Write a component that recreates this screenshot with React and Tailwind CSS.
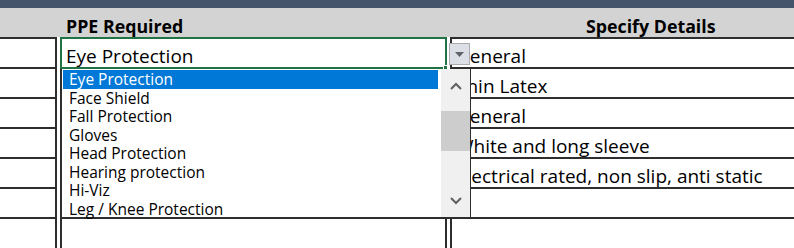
import React from "react";

const rows = [
  { b: "Eye Protection", c: "General" },
  { b: "", c: "Thin Latex" },
  { b: "", c: "General" },
  { b: "", c: "White and long sleeve" },
  { b: "", c: "Electrical rated, non slip, anti static" },
  { b: "", c: "" },
  { b: "", c: "", last: true },
];

const items = [
  "Eye Protection",
  "Face Shield",
  "Fall Protection",
  "Gloves",
  "Head Protection",
  "Hearing protection",
  "Hi-Viz",
  "Leg / Knee Protection",
];

export default function App() {
  return (
    <div className="relative w-[794px] h-[248px] overflow-hidden bg-white text-black font-['Open_Sans',sans-serif]">
      <div className="h-[8px] bg-[#44546a]" />
      <div className="h-[29px] bg-[#d3d3d3] flex items-end">
        <div className="w-[66px] shrink-0" />
        <div className="w-[384px] shrink-0 font-bold text-[17.8px] leading-[20px] pb-[1px]">PPE Required</div>
        <div className="shrink-0 pl-[136px] font-bold text-[17.8px] leading-[20px] pb-[1px] whitespace-nowrap">Specify Details</div>
      </div>
      {rows.map((r, i) => (
        <div key={i} className={`flex ${r.last ? "h-[31px]" : "h-[30px]"}`}>
          <div className="w-[57px] shrink-0 border-t-2 border-r-2 border-[#2e2e2e]" />
          <div className="w-[3px] shrink-0" />
          <div className="w-[387px] shrink-0 border-t-2 border-l-2 border-r-2 border-[#2e2e2e] flex items-end pl-[4px] pb-[1px] text-[19px] leading-[20px] whitespace-nowrap">
            {r.b}
          </div>
          <div className="w-[3px] shrink-0" />
          <div className="flex-1 border-t-2 border-l-2 border-[#2e2e2e] flex items-end pl-[4px] pb-[1px] text-[19px] leading-[20px] whitespace-nowrap overflow-hidden">
            {r.c}
          </div>
        </div>
      ))}

      {/* active cell */}
      <div className="absolute left-[60px] top-[37px] w-[387px] h-[32px] border-2 border-[#217346] pointer-events-none" />
      <div className="absolute left-[443px] top-[65px] w-[5px] h-[5px] bg-[#217346] border border-white" />

      {/* dropdown button */}
      <div className="absolute left-[449px] top-[43px] w-[21px] h-[22px] bg-[#dcdfe6] border border-[#a9abb0] flex items-center justify-center">
        <svg width="9" height="5" viewBox="0 0 9 5">
          <polygon points="0,0 9,0 4.5,5" fill="#5f6368" />
        </svg>
      </div>

      {/* dropdown list */}
      <div className="absolute left-[60px] top-[69px] w-[411px] h-[150px] bg-white border-l-2 border-r border-b-2 border-[#2e2e2e] flex">
        <div className="flex-1 flex flex-col pl-[1px] pr-[3px] pt-[1px] text-[15.5px] leading-[18.5px] whitespace-nowrap">
          {items.map((it, i) => (
            <div
              key={it}
              className={`h-[18.5px] pl-[6px] ${i === 0 ? "bg-[#0078d7] text-white" : "text-black"}`}
            >
              {it}
            </div>
          ))}
        </div>
        <div className="w-[29px] shrink-0 bg-[#f0f0f0] flex flex-col">
          <div className="h-[34px] flex items-center justify-center">
            <svg width="12" height="8" viewBox="0 0 12 8">
              <polyline points="1,7 6,2 11,7" fill="none" stroke="#606060" strokeWidth="2" />
            </svg>
          </div>
          <div className="h-[8px]" />
          <div className="h-[40px] bg-[#cdcdcd]" />
          <div className="flex-1" />
          <div className="h-[32px] flex items-center justify-center">
            <svg width="12" height="8" viewBox="0 0 12 8">
              <polyline points="1,1 6,6 11,1" fill="none" stroke="#606060" strokeWidth="2" />
            </svg>
          </div>
        </div>
      </div>
    </div>
  );
}
